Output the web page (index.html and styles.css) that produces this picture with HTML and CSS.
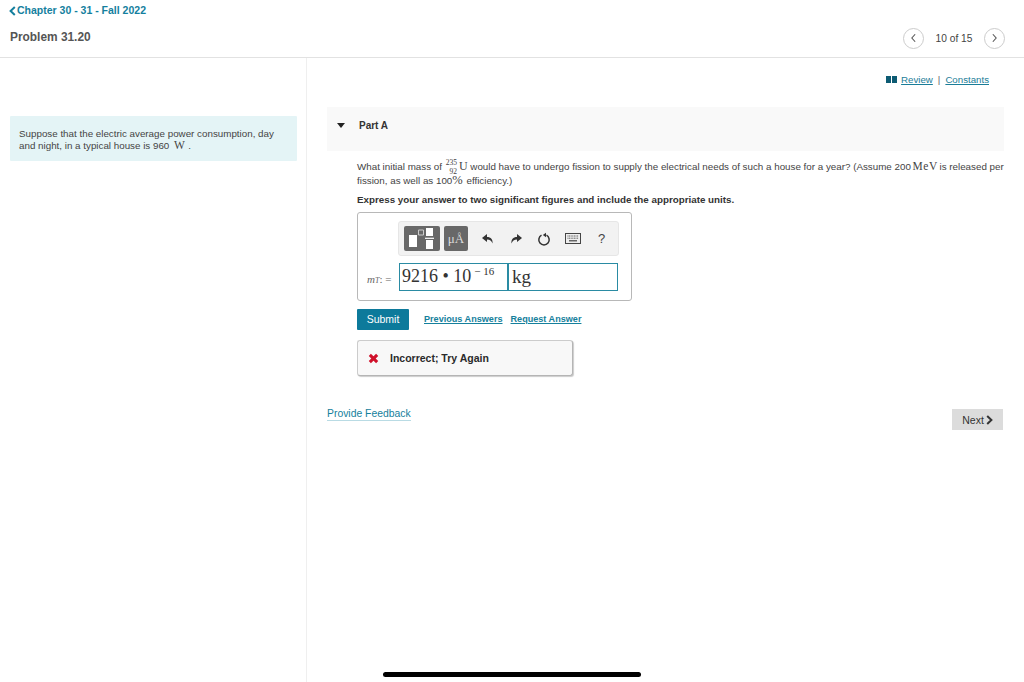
FILE: index.html
```html
<!DOCTYPE html>
<html lang="en">
<head>
<meta charset="utf-8">
<title>Problem 31.20</title>
<link rel="stylesheet" href="styles.css">
</head>
<body>
<header class="top">
  <div class="crumbs">
    <a class="chapter" href="#"><svg class="chev" viewBox="0 0 7 10" width="7" height="10"><path d="M5.8 1 1.6 5l4.2 4" fill="none" stroke="currentColor" stroke-width="2"/></svg>Chapter 30 - 31 - Fall 2022</a>
    <h1 class="title">Problem 31.20</h1>
  </div>
  <nav class="pager">
    <span class="round"><svg viewBox="0 0 8 12" width="7" height="10"><path d="M6 1.500 2 6l4 4.500" fill="none" stroke="#555" stroke-width="1.300"/></svg></span>
    <span class="count">10 of 15</span>
    <span class="round"><svg viewBox="0 0 8 12" width="7" height="10"><path d="M2 1.500 6 6l-4 4.500" fill="none" stroke="#555" stroke-width="1.300"/></svg></span>
  </nav>
</header>
<div class="columns">
  <aside class="side">
    <p class="intro">Suppose that the electric average power consumption, day and night, in a typical house is 960 <span class="math wide">W</span> .</p>
  </aside>
  <main class="main">
    <div class="tools">
      <svg class="book" viewBox="0 0 11 7" width="11" height="7"><path d="M0 0h5v7H0zM6 0h5v7H6z" fill="#0d5b73"/></svg>
      <a href="#">Review</a><span class="bar">|</span><a href="#">Constants</a>
    </div>
    <section class="part">
      <span class="tri"></span><h2 class="part-name">Part A</h2>
    </section>
    <div class="body">
      <p class="q">What initial mass of <span class="iso"><span>235</span><span>92</span></span><span class="math u">U</span> would have to undergo fission to supply the electrical needs of such a house for a year? (Assume 200 <span class="math mev">MeV</span> is released per fission, as well as 100<span class="math pct">%</span> efficiency.)</p>
      <p class="ask">Express your answer to two significant figures and include the appropriate units.</p>
      <div class="answer">
        <div class="toolbar">
          <span class="tbtn tpl">
            <svg viewBox="0 0 36 25" width="36" height="25"><path d="M5 9h8v12H5z" fill="#fff"/><path d="M14.500 4h5v5h-5z" fill="none" stroke="#ccc"/><path d="M22 2h7v8h-7zM22 14h7v9h-7z" fill="#fff"/><path d="M21 11.700h9v1.200h-9z" fill="#fff"/></svg>
          </span>
          <span class="tbtn unit">μÅ</span>
          <svg class="ic first" viewBox="0 0 14 12" width="14" height="12"><path d="M6 1 1 5l5 4V6.500c3 0 4.500 1.300 5.500 4 .5-4-1.500-6.500-5.500-6.500z" fill="#333"/></svg>
          <svg class="ic" viewBox="0 0 14 12" width="14" height="12"><path d="M8 1l5 4-5 4V6.500c-3 0-4.500 1.300-5.500 4C2 6.500 4 4 8 4z" fill="#333"/></svg>
          <svg class="ic" viewBox="0 0 14 14" width="14" height="14"><path d="M4.500 3.200a5.200 5.200 0 1 0 5 0" fill="none" stroke="#333" stroke-width="1.500"/><path d="M9 .8v4.400l-3.200-2.200z" fill="#333"/></svg>
          <svg class="ic" viewBox="0 0 16 11" width="16" height="11"><rect x=".5" y=".5" width="15" height="10" fill="#eee" stroke="#444"/><path d="M2.500 3h11M2.500 5.200h11" stroke="#555" stroke-dasharray="1 .6"/><path d="M4 7.800h8" stroke="#444" stroke-width="1.200"/></svg>
          <span class="help">?</span>
        </div>
        <div class="entry">
          <span class="lab"><i>m<sub>T</sub></i>: =</span>
          <span class="field val">9216 • 10<sup>− 16</sup></span>
          <span class="field units">kg</span>
        </div>
      </div>
      <div class="actions">
        <a class="submit" href="#">Submit</a>
        <a class="act" href="#">Previous Answers</a>
        <a class="act" href="#">Request Answer</a>
      </div>
      <div class="result">
        <svg viewBox="0 0 12 12" width="11" height="11"><path d="M2 2l8 8M10 2l-8 8" stroke="#d0112b" stroke-width="3.300"/></svg>
        <span>Incorrect; Try Again</span>
      </div>
    </div>
    <div class="foot">
      <a class="fb" href="#">Provide Feedback</a>
      <a class="next" href="#">Next <svg viewBox="0 0 7 10" width="7" height="10"><path d="M1.200 1l4.200 4-4.200 4" fill="none" stroke="#333" stroke-width="2"/></svg></a>
    </div>
  </main>
</div>
<div class="home"></div>
</body>
</html>
```
FILE: styles.css
```css
* { box-sizing: border-box; }
html, body { margin: 0; height: 682px; overflow: hidden; }
body { font-family: "Liberation Sans", Arial, sans-serif; color: #333; background: #fff; font-size: 10px; position: relative; }
a { color: #0c7c9c; text-decoration: none; }
p, h1, h2 { margin: 0; }

.top { height: 58px; border-bottom: 1px solid #e2e2e2; display: flex; justify-content: space-between; padding: 0 19px 0 9px; }
.crumbs { padding-top: 4px; }
.chapter { display: flex; align-items: center; gap: 1px; font-size: 10.500px; font-weight: bold; line-height: 13px; color: #147f9e; }
.title { font-size: 11.900px; font-weight: bold; color: #555; line-height: 14px; margin: 13px 0 0 1px; }
.pager { display: flex; align-items: center; padding-top: 19px; height: 57px; }
.round { width: 21px; height: 21px; border: 1px solid #ccc; border-radius: 50%; display: flex; align-items: center; justify-content: center; }
.count { width: 60px; text-align: center; font-size: 10.200px; color: #444; }

.columns { display: flex; height: 624px; }
.side { width: 307px; border-right: 1px solid #efefef; padding: 58px 9px 0 10px; }
.intro { background: #e4f4f6; padding: 12px 9px 9px; line-height: 12px; height: 45px; font-size: 9.800px; color: #444; border-radius: 1px; }
.math { font-family: "Liberation Serif", serif; font-size: 11.500px; line-height: 0; }
.wide { letter-spacing: .5px; margin-left: 2px; }

.main { width: 717px; padding: 0 20px 0 20px; }
.tools { height: 49px; padding-top: 15px; padding-right: 15px; display: flex; justify-content: flex-end; align-items: flex-start; font-size: 9.700px; line-height: 13px; }
.tools a { color: #1a7d98; text-decoration: underline; text-decoration-thickness: 1px; }
.book { margin: 3px 4px 0 0; }
.bar { margin: 0 5px; color: #666; }
.part { height: 44px; background: #f9f9f9; display: flex; align-items: center; padding: 0 0 8px 10px; }
.tri { width: 0; height: 0; border-left: 4px solid transparent; border-right: 4px solid transparent; border-top: 5px solid #222; margin-right: 14px; }
.part-name { font-size: 10px; font-weight: bold; color: #333; }

.body { padding: 9px 0 0 30px; }
.q { font-size: 9.800px; line-height: 14px; color: #444; margin-right: -2px; }
.iso { display: inline-flex; flex-direction: column; align-items: flex-end; justify-content: center; height: 0; vertical-align: middle; font-family: "Liberation Serif", serif; font-size: 7.500px; line-height: 9px; margin: 0 2px 0 1px; }
.u { font-size: 12px; }
.mev { letter-spacing: .5px; margin-left: -1px; margin-right: -1px; }
.pct { font-size: 12.500px; letter-spacing: -1px; margin-right: 2px; }
.ask { font-size: 9.800px; font-weight: bold; color: #333; margin-top: 6px; line-height: 12px; }
.answer { width: 275px; height: 89px; margin-top: 6px; border: 1px solid #b8b8b8; border-radius: 3px; padding: 8px 13px 0 7px; }
.toolbar { width: 221px; height: 35px; margin-left: 33px; background: #f2f2f2; border: 1px solid #e6e6e6; border-radius: 3px; display: flex; align-items: center; padding-left: 5px; }
.tbtn { height: 25px; background: #686868; border-radius: 2px; color: #ddd; display: flex; align-items: center; justify-content: center; }
.tpl { width: 36px; }
.unit { width: 24px; margin-left: 4px; font-family: "Liberation Serif", serif; font-size: 13px; }
.ic { margin-left: 14px; }
.first { margin-left: 13px; }
.help { font-size: 13px; color: #444; margin-left: 17px; }
.entry { display: flex; align-items: stretch; margin-top: 7px; height: 28px; }
.lab { width: 34px; padding-left: 2px; align-self: center; font-family: "Liberation Serif", serif; font-size: 11px; color: #666; white-space: nowrap; padding-top: 3px; }
.lab sub { font-size: 8px; vertical-align: baseline; }
.field { border: 1px solid #2a8ba3; font-family: "Liberation Serif", serif; font-size: 18px; color: #333; padding-left: 2px; line-height: 25px; white-space: nowrap; }
.val { width: 109px; }
.val sup { font-size: 11px; line-height: 0; vertical-align: baseline; position: relative; top: -7px; margin-left: 3px; }
.units { width: 110px; padding-left: 3px; font-size: 19px; }
.actions { display: flex; align-items: center; margin-top: 8px; height: 21px; }
.submit { width: 52px; height: 21px; background: #0d7a9b; color: #fff; font-size: 10.500px; line-height: 21px; text-align: center; border-radius: 1px; margin-right: 15px; }
.act { font-size: 9.100px; font-weight: bold; color: #15809c; text-decoration: underline; margin-right: 8px; margin-bottom: 2px; }
.result { width: 216px; height: 36px; margin-top: 10px; background: #f8f8f8; border: 1px solid #ccc; border-bottom-color: #b5b5b5; border-right-color: #b5b5b5; border-radius: 3px; box-shadow: 1px 1px 1px #ccc; display: flex; align-items: center; padding-left: 10px; gap: 11px; font-weight: bold; font-size: 10.500px; color: #2a2a2a; }
.foot { display: flex; justify-content: space-between; align-items: flex-start; margin-top: 31px; }
.fb { font-size: 10.400px; line-height: 13px; height: 14px; border-bottom: 1px solid #b9dbe4; color: #15809c; }
.next { width: 51px; height: 21px; margin: 2px 1px 0 0; background: #dcdcdc; color: #333; font-size: 10.500px; display: flex; align-items: center; justify-content: center; gap: 2px; }
.home { position: absolute; left: 383px; top: 672px; width: 258px; height: 5px; background: #000; border-radius: 3px; }
```
